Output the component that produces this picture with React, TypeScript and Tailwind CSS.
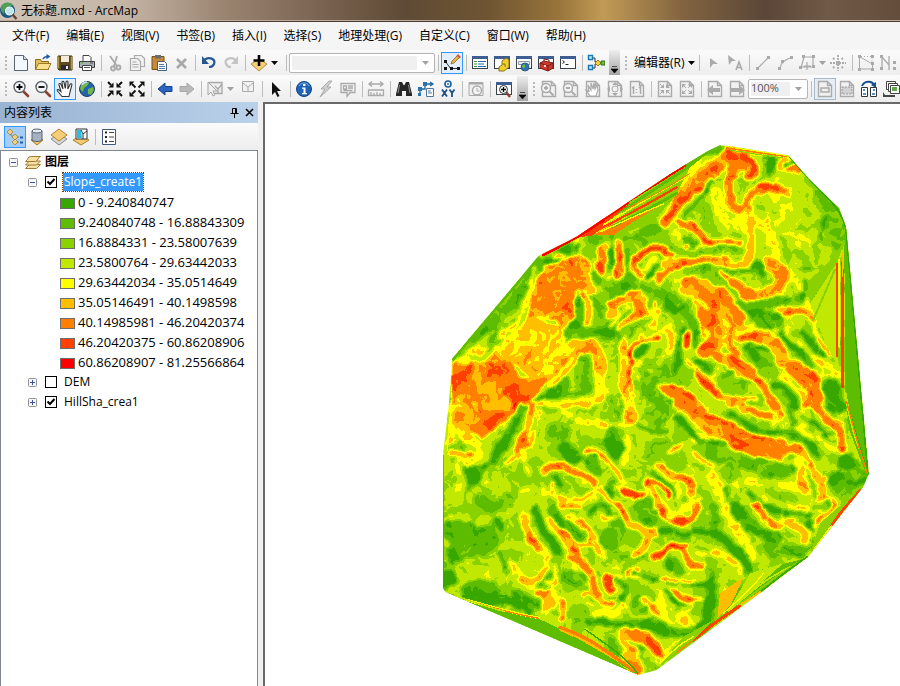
import { useState } from 'react';
import type { ReactNode } from 'react';
import clsx from 'clsx';

const menus = ['文件(F)', '编辑(E)', '视图(V)', '书签(B)', '插入(I)', '选择(S)', '地理处理(G)', '自定义(C)', '窗口(W)', '帮助(H)'];

const legend = [
  { color: '#38a800', label: '0 - 9.240840747' },
  { color: '#5ebd00', label: '9.240840748 - 16.88843309' },
  { color: '#8bd100', label: '16.8884331 - 23.58007639' },
  { color: '#c1e800', label: '23.5800764 - 29.63442033' },
  { color: '#ffff00', label: '29.63442034 - 35.0514649' },
  { color: '#ffbf00', label: '35.05146491 - 40.1498598' },
  { color: '#ff8000', label: '40.14985981 - 46.20420374' },
  { color: '#ff4000', label: '46.20420375 - 60.86208906' },
  { color: '#ff0000', label: '60.86208907 - 81.25566864' },
];

const G = '#aaaaaa';

const pageOutline = <path d="M2.5 1.5h9l4 4v11h-13zM11.5 1.5v4h4" fill="#f1f1f1" stroke={G} strokeWidth="1.4" />;
const windowFrame = (
  <>
    <rect x="1.5" y="2.5" width="15" height="12" fill="#fff" stroke="#3b4048" />
    <path d="M1 2h16v3H1z" fill="#3f5f92" />
  </>
);

// All drawings use an 18 x 18 box
const icons: Record<string, ReactNode> = {
  new: (
    <>
      <path d="M2.5 1.5h9l4 4v11h-13z" fill="#f3f8fd" stroke="#5b6570" />
      <path d="M11.5 1.5v4h4" fill="#c8d6e6" stroke="#5b6570" />
    </>
  ),
  open: (
    <>
      <path d="M1.5 15.5v-10h5l1 2h7v8z" fill="#e2bd58" stroke="#8d6a1c" />
      <path d="M1.5 15.5l3-6h12.5l-3 6z" fill="#f8e08e" stroke="#a07a25" />
      <path d="M9 5c1-2 2-2.5 5-2.5" fill="none" stroke="#1d5da8" strokeWidth="1.5" />
      <path d="M12.5 0l4 2.5-4 2.8z" fill="#1d5da8" />
    </>
  ),
  save: (
    <>
      <path d="M2 2h14v14H3l-1-1z" fill="#5d4a1e" stroke="#3a2f16" />
      <path d="M5 2h8v6H5z" fill="#f3edd8" />
      <path d="M2.5 2.5v12M15.5 2.5v13" stroke="#b89743" strokeWidth="1.5" />
      <path d="M5 11h8v5H5z" fill="#2b2b2b" />
      <path d="M10 12h2v3h-2z" fill="#eee" />
    </>
  ),
  print: (
    <>
      <path d="M5 7V1.5h6l2 2V7" fill="#fff" stroke="#444" />
      <path d="M1.5 7.5h15v6h-15z" fill="#a9b0b5" stroke="#3e3e3e" />
      <path d="M4.5 11.5h9v5h-9z" fill="#fff" stroke="#444" />
      <path d="M3 9h2" stroke="#5fc22c" strokeWidth="1.5" />
      <path d="M12 9h3M6 13.5h6" stroke="#555" />
    </>
  ),
  cut: (
    <g fill="none" stroke={G} strokeWidth="1.8">
      <path d="M4 2l7 10M11 2L8 12" />
      <circle cx="12.5" cy="13.5" r="2" />
      <circle cx="7" cy="14.5" r="2" />
    </g>
  ),
  copy: (
    <g fill="#f1f1f1" stroke={G} strokeWidth="1.2">
      <path d="M6.5 1.5h7l3 3v8h-10z" />
      <path d="M2.5 4.5h7l3 3v9h-10zM4.5 8h4M4.5 10.5h6M4.5 13h6" />
    </g>
  ),
  paste: (
    <>
      <path d="M2 2.5h12v13H2z" fill="#c78a3c" stroke="#7c4f17" />
      <path d="M5 1h6v3.5H5z" fill="#6b6b6b" />
      <path d="M7.5 7.5h7l2 2v7h-9z" fill="#fff" stroke="#48617d" />
      <path d="M9 10.5h5M9 12.5h6M9 14.5h6" stroke="#4a7db8" />
    </>
  ),
  remove: <path d="M5 5l9 9M14 5l-9 9" stroke="#a8a8a8" strokeWidth="2.6" />,
  undo: (
    <>
      <path d="M4 6c5-4 12-1 10 4-.8 2-3 3-5 3" fill="none" stroke="#24588f" strokeWidth="2.2" />
      <path d="M2 2v8h7z" fill="#24588f" />
    </>
  ),
  redo: (
    <>
      <path d="M14 6C9 2 2 5 4 10c.8 2 3 3 5 3" fill="none" stroke="#c4c4c4" strokeWidth="2.2" />
      <path d="M16 2v8H9z" fill="#c4c4c4" />
    </>
  ),
  addData: (
    <>
      <path d="M1 10l8-5 8 5-8 7z" fill="#f2cf72" stroke="#b98f3c" />
      <path d="M9 1v11M3.5 6.5h11" stroke="#000" strokeWidth="2.6" />
    </>
  ),
  editor: (
    <>
      <path d="M2.5 7.5l5 7h8" fill="none" stroke="#333" />
      <path d="M1 6h3v3H1zM1 13h3v3H1zM7 13h3v3H7zM14 13h3v3h-3z" fill="#111" />
      <path d="M8 10l1-3 6-6 2 2-6 6z" fill="#e9b54c" stroke="#8a6524" strokeWidth=".8" />
      <path d="M15 0l3 3-1.5 1.5-3-3z" fill="#d85247" />
    </>
  ),
  contents: (
    <>
      {windowFrame}
      <path d="M3 7.5h3M3 10h3M3 12.5h3" stroke="#3b8d3b" />
      <path d="M7 7.5h8M7 10h6M7 12.5h8" stroke="#2b6bb3" />
    </>
  ),
  catalog: (
    <>
      {windowFrame}
      <path d="M9 7l4-3 3 2v7l-5 4H6v-4l3-2z" fill="#f0cf2e" stroke="#8c7514" />
      <path d="M9 10h3v3" fill="none" stroke="#8c7514" />
    </>
  ),
  search: (
    <>
      {windowFrame}
      <path d="M3.5 7.5h11v3h-11z" fill="#e8edf2" stroke="#8d99a6" />
      <circle cx="10" cy="13" r="4" fill="#2d72b5" stroke="#285176" strokeWidth=".8" />
      <path d="M7 12c2-3 4-1 3 1s-2 2-3-1z" fill="#72b63b" />
    </>
  ),
  toolbox: (
    <>
      {windowFrame}
      <path d="M3 9l4-2 9 2v5l-5 3-8-3z" fill="#cd3a30" stroke="#7c1a15" />
      <path d="M3 9l8 3 5-3M11 12v5M7 7V5l5 1v2" fill="none" stroke="#7c1a15" />
      <path d="M8 11v2" stroke="#fff" strokeWidth="1.5" />
    </>
  ),
  python: (
    <>
      {windowFrame}
      <path d="M3.5 6.5l2 1.5-2 1.5M6.5 10.5h3" fill="none" stroke="#222" />
    </>
  ),
  model: (
    <>
      <path d="M5 4h3v4h4M5 14h3v-4h3" fill="none" stroke="#333" />
      <path d="M1.5 1.5h4v4h-4zM1.5 11.5h4v4h-4z" fill="#c6ebff" stroke="#1778bd" strokeWidth="1.4" />
      <path d="M8 9l3-3 3 3-3 3z" fill="#f1d23b" stroke="#9b811c" />
      <path d="M14 7h4v4h-4z" fill="#6dbb3e" stroke="#32711a" />
    </>
  ),
  editTool: <path d="M6 4l8 6H9l-3 4z" fill={G} />,
  editNote: (
    <>
      <path d="M2 1l8 6H6l-3 4z" fill={G} />
      <path d="M10 16l3-8 3 8M11 13.5h4" fill="none" stroke={G} strokeWidth="1.6" />
    </>
  ),
  segment: (
    <>
      <path d="M4 14L14 4" stroke={G} strokeWidth="1.2" />
      <path d="M2 13h3v3H2zM13 2h3v3h-3z" fill={G} />
    </>
  ),
  arc: (
    <>
      <path d="M4 14c1-5 4-8 10-10" fill="none" stroke={G} strokeWidth="1.2" />
      <path d="M2 13h3v3H2zM5 6h3v3H5zM14 2h3v3h-3z" fill={G} />
    </>
  ),
  trace: (
    <>
      <path d="M3 14L6 3h9v10H3M9 8v8M6 12h7" fill="none" stroke={G} strokeWidth="1.2" />
      <path d="M4 1h3v3H4zM14 1h3v3h-3zM14 11h3v3h-3zM1 12h3v3H1z" fill={G} />
    </>
  ),
  point: (
    <>
      <path d="M9 1v16M1 9h16M4 4l2 2M14 4l-2 2M4 14l2-2M14 14l-2-2" stroke={G} strokeWidth="1.8" strokeDasharray="2 1" />
      <path d="M7 7h4v4H7z" fill={G} />
    </>
  ),
  vertices: (
    <>
      <path d="M2.5 3v12h13v-5L3 3" fill="none" stroke={G} />
      <path d="M4 2.5h11v7" fill="none" stroke={G} strokeDasharray="1 2" />
      <path d="M1 1h3v3H1zM14 1h3v3h-3zM1 14h3v3H1zM14 14h3v3h-3zM14 8h3v3h-3z" fill={G} />
    </>
  ),
  reshape: (
    <>
      <path d="M3 15V3l7 8v5M10 2v14" fill="none" stroke={G} strokeWidth="1.3" />
      <path d="M1 1h3v3H1zM1 13h3v3H1zM14 7h3v3h-3zM14 13h3v3h-3z" fill={G} />
    </>
  ),
  zoomIn: (
    <>
      <path d="M11 11l5 5" stroke="#8c4032" strokeWidth="2.6" strokeLinecap="round" />
      <circle cx="7.5" cy="7" r="5.5" fill="#f4f7fa" stroke="#5c6269" strokeWidth="1.4" />
      <path d="M4.5 7h6M7.5 4v6" stroke="#000" strokeWidth="1.8" />
    </>
  ),
  zoomOut: (
    <>
      <path d="M11 11l5 5" stroke="#8c4032" strokeWidth="2.6" strokeLinecap="round" />
      <circle cx="7.5" cy="7" r="5.5" fill="#f4f7fa" stroke="#5c6269" strokeWidth="1.4" />
      <path d="M4.5 7h6" stroke="#000" strokeWidth="1.8" />
    </>
  ),
  pan: (
    <path
      d="M6 16.5L1.5 11c-1-1.5.5-2 1.5-1l2 1.5L3 5c-.4-1.6 1.4-2 2-.5L7 9 6 2.5C5.8 1 7.7.8 8 2.3L9.3 8.5 10 2c.2-1.5 2-1.3 2 0l-.2 7 2.2-4.5c.7-1.3 2.3-.7 1.8.7L14 12l-1 4.5z"
      fill="#fff"
      stroke="#333"
      strokeWidth="1.1"
    />
  ),
  globe: (
    <>
      <circle cx="9" cy="9" r="7.5" fill="#2464ae" stroke="#1d3f69" />
      <path d="M3 5c3-4 7-4 8-2l-2 3-3 2-1 4-3-3zM10 9l5-2 1 3-3 5-3-1z" fill="#73b64a" />
      <path d="M4 5c1-2 3-3 5-3" fill="none" stroke="#c6e4f5" strokeWidth="1.5" />
    </>
  ),
  fixedIn: (
    <>
      <path d="M2 2l3 3M16 2l-3 3M2 16l3-3M16 16l-3-3" stroke="#111" strokeWidth="2" />
      <path d="M7.5 2.5v5h-5zM10.5 2.5v5h5zM7.5 15.5v-5h-5zM10.5 15.5v-5h5z" fill="#111" />
    </>
  ),
  fixedOut: (
    <>
      <path d="M4 4l3.5 3.5M14 4l-3.5 3.5M4 14l3.5-3.5M14 14l-3.5-3.5" stroke="#111" strokeWidth="1.8" />
      <path d="M1.5 1.5h5l-5 5zM16.5 1.5h-5l5 5zM1.5 16.5h5l-5-5zM16.5 16.5h-5l5-5z" fill="#111" />
    </>
  ),
  back: <path d="M2 9l7-6v3.5h7v5H9V15z" fill="#2d63c0" stroke="#1b438d" />,
  forward: <path d="M16 9L9 3v3.5H2v5h7V15z" fill="#b9b9b9" stroke="#a9a9a9" />,
  selectFeatures: (
    <>
      <path d="M3 2.5h13v11H8M9 6l3 3 4-5M12 9v4" fill="#ececec" stroke={G} strokeWidth="1.4" />
      <path d="M2 2v13l3-3 2 4 2-1-2-4h4z" fill="#efefef" stroke="#a4a4a4" />
    </>
  ),
  clearSelection: <path d="M3.5 1.5h11v10h-11zM4 3l5 4 5-4M9 7v4" fill="#f1f1f1" stroke={G} />,
  pointer: <path d="M5 2v13l3-3 2.5 5 2-1-2.5-5h4z" fill="#111" />,
  identify: (
    <>
      <circle cx="9" cy="9" r="7.5" fill="#1f63b9" stroke="#15427e" />
      <path d="M4 6c2-4 8-4 10 0" stroke="#7fb2e5" fill="none" />
      <path d="M8 4h2.5v2H8zM7 7.5h3.5V13H12v1.2H7V13h1.5V8.7H7z" fill="#fff" />
    </>
  ),
  hyperlink: <path d="M12 1L4 9h4l-5 8L14 7h-4l5-6z" fill="#cfcfcf" stroke={G} />,
  popup: <path d="M2 3.5h14v9h-5l-3 4v-4H2zM4.5 6h3v3h-3zM9 6h5M9 8h5M4.5 10.5h9" fill="none" stroke={G} strokeWidth="1.3" />,
  measure: (
    <>
      <path d="M2 4h14M5 1.5L2 4l3 2.5M13 1.5L16 4l-3 2.5" fill="none" stroke={G} strokeWidth="1.5" />
      <path d="M1.5 10h15v5.5h-15zM4 12v3M7 13v2M10 12v3M13 13v2" fill="none" stroke={G} strokeWidth="1.3" />
    </>
  ),
  find: (
    <>
      <path d="M4 2h3l1.5 3h1L11 2h3l3 12v2h-6v-5H7v5H1v-2z" fill="#272727" />
      <path d="M4.5 5L3 13M13.5 5l1.5 8" stroke="#8f8f8f" />
    </>
  ),
  route: (
    <>
      <path d="M3 15V9h5V4h7M13 2l3 2-3 2" fill="none" stroke="#24669c" strokeWidth="1.3" />
      <path d="M1 7h4v4H1zM6 2h4v4H6zM1 13h3v3H1z" fill="#2c74b0" />
      <path d="M9.5 8.5h7v8h-7zM11 11h3M11 13h4" fill="#fff" stroke="#52779a" />
    </>
  ),
  goToXY: (
    <>
      <circle cx="9" cy="4" r="3" fill="#fff" stroke="#1d5c9c" strokeWidth="1.6" />
      <circle cx="9" cy="4" r="1" fill="#1d5c9c" />
      <path d="M3 9.5l5 7M8 9.5l-5 7M10.5 9.5l2.5 3.5 2.5-3.5M13 13v4" fill="none" stroke="#1d4f88" strokeWidth="1.8" />
    </>
  ),
  time: (
    <>
      <path d="M2 2.5h14v13H2z" fill="#eee" stroke={G} />
      <path d="M2 2h14v2.5H2z" fill={G} />
      <circle cx="10" cy="10.5" r="4.5" fill="#f5f5f5" stroke={G} strokeWidth="1.4" />
      <path d="M10 8v3h2.5" fill="none" stroke={G} />
    </>
  ),
  viewer: (
    <>
      {windowFrame}
      <path d="M11 12l4 5" stroke="#8c4032" strokeWidth="2.5" />
      <circle cx="8.5" cy="9.5" r="4" fill="#fff" stroke="#333" />
      <path d="M6 9.5h5M8.5 7v5" stroke="#000" strokeWidth="1.3" />
    </>
  ),
  pageZoomIn: (
    <>
      {pageOutline}
      <circle cx="6" cy="8" r="4.5" fill="#f4f4f4" stroke={G} strokeWidth="1.5" />
      <path d="M4 8h4M6 6v4M9.5 11.5l4 4" stroke={G} strokeWidth="1.8" />
    </>
  ),
  pageZoomOut: (
    <>
      {pageOutline}
      <circle cx="6" cy="8" r="4.5" fill="#f4f4f4" stroke={G} strokeWidth="1.5" />
      <path d="M4 8h4M9.5 11.5l4 4" stroke={G} strokeWidth="1.8" />
    </>
  ),
  pagePan: (
    <>
      {pageOutline}
      <path d="M6 16L2 10l3 1-1-6 3 5V3l2 6 1-6 1 6 2-4 1 5-2 6z" fill="#fff" stroke={G} strokeWidth="1.2" />
    </>
  ),
  pageWhole: (
    <>
      {pageOutline}
      <path d="M9 2l3 3H6zM9 16l3-3H6zM1 9l3-3v6zM17 9l-3-3v6z" fill={G} />
      <circle cx="9" cy="9" r="3" fill="none" stroke={G} />
    </>
  ),
  pageActual: (
    <>
      {pageOutline}
      <path d="M4 8l1.5-1v7M11 8l1.5-1v7M8.5 9v1M8.5 12v1" fill="none" stroke={G} strokeWidth="1.5" />
    </>
  ),
  pageFixedIn: (
    <>
      {pageOutline}
      <path d="M8 4v4H4zM10 4v4h4zM8 14v-4H4zM10 14v-4h4z" fill={G} />
      <path d="M4 4l4 4M14 4l-4 4M4 14l4-4M14 14l-4-4" stroke={G} />
    </>
  ),
  pageFixedOut: (
    <>
      {pageOutline}
      <path d="M4 4h4L4 8zM14 4h-4l4 4zM4 14h4l-4-4zM14 14h-4l4-4z" fill={G} />
      <path d="M5 5l3 3M13 5l-3 3M5 13l3-3M13 13l-3-3" stroke={G} />
    </>
  ),
  pageBack: (
    <>
      {pageOutline}
      <path d="M1 10l6-5v3h7v4H7v3z" fill={G} />
    </>
  ),
  pageForward: (
    <>
      {pageOutline}
      <path d="M17 10l-6-5v3H3v4h8v3z" fill={G} />
    </>
  ),
  draft: (
    <>
      {pageOutline}
      <path d="M5 8h8v4H5z" fill="none" stroke={G} strokeWidth="1.5" />
    </>
  ),
  focus: (
    <>
      {pageOutline}
      <path d="M4 7h10v7H4z" fill="#d0d0d0" stroke="#999" strokeDasharray="2 1" />
    </>
  ),
  changeLayout: (
    <>
      <path d="M2 6c2-5 10-6 12-1" fill="none" stroke="#17508d" strokeWidth="2" />
      <path d="M16 2v6l-5-3z" fill="#17508d" />
      <path d="M1.5 7.5h6v9h-6zM10.5 7.5h6v9h-6z" fill="#fff" stroke="#333" />
      <path d="M3 9h2v2H3zM3 13h3v2H3zM13 9h2v2h-2zM12 13h3v2h-3z" fill="#4d93c8" />
    </>
  ),
  drivenPages: (
    <>
      <path d="M4.5 1.5h9v8h-9z" fill="#fff" stroke="#444" />
      <path d="M6.5 3.5h9v8h-9z" fill="#fff" stroke="#444" />
      <path d="M8.5 5.5h9v8h-9z" fill="#fff" stroke="#444" />
      <path d="M10 7h5v4h-5z" fill="#5fa945" />
      <path d="M1 12l2 3h10v2H1z" fill="#444" />
    </>
  ),
  listOrder: (
    <>
      <path d="M5 5v3h4v6M9 9h4M9 14h4" fill="none" stroke="#7189a5" />
      <path d="M1 4l3-3 3 3-3 3zM6 9l3-3 3 3-3 3zM6 14l3-3 3 3-3 3z" fill="#f3cf79" stroke="#a8802e" strokeWidth=".8" />
      <path d="M14 9.5h3M14 14.5h3" stroke="#1d63a8" strokeWidth="1.8" />
    </>
  ),
  listSource: (
    <>
      <path d="M3 12l6-3 6 3-6 5z" fill="#f1c55e" stroke="#a8802e" />
      <path d="M4 3v9c2 2 8 2 10 0V3z" fill="#a6b1c1" stroke="#566273" />
      <ellipse cx="9" cy="3" rx="5" ry="2" fill="#e5eaf1" stroke="#566273" />
    </>
  ),
  listVisibility: (
    <>
      <path d="M1 11l8-5 8 5-8 6z" fill="#d5d5d5" stroke="#8b8b8b" />
      <path d="M1 7l8-6 8 6-8 6z" fill="#f6ce77" stroke="#b0822e" />
    </>
  ),
  listSelection: (
    <>
      <path d="M1 12l8-4 8 4-8 5z" fill="#f3cb70" stroke="#a8802e" />
      <path d="M4 1h11v10H4z" fill="#fff" stroke="#333" />
      <path d="M5 2h4l1 8H5z" fill="#29bfe0" />
      <path d="M9 2l2 4 4-3M11 6v5" fill="none" stroke="#333" />
    </>
  ),
  listOptions: (
    <>
      <path d="M2.5 1.5h13v15h-13z" fill="#fff" stroke="#41597a" />
      <path d="M5 4.5h2M5 9h2M5 13.5h2" stroke="#222" strokeWidth="2" />
      <path d="M9 4.5h5M9 9h5M9 13.5h5" stroke="#444" />
    </>
  ),
};

function Icon({ name }: { name: string }) {
  return (
    <svg viewBox="0 0 18 18" className="size-[18px] shrink-0" aria-hidden="true">
      {icons[name]}
    </svg>
  );
}

function ToolButton({ name, active, muted }: { name: string; active?: boolean; muted?: boolean }) {
  return (
    <button
      type="button"
      aria-label={name}
      className={clsx(
        'flex h-[22px] w-[22px] shrink-0 items-center justify-center border',
        active && !muted && 'border-[#3399ff] bg-[#e2effb]',
        active && muted && 'border-[#a9b8c8] bg-[#e6edf4]',
        !active && 'border-transparent',
      )}
    >
      <Icon name={name} />
    </button>
  );
}

function Separator() {
  return <div className="mr-0.5 ml-[3px] h-4 w-px shrink-0 bg-[#bdbdbd]" />;
}

function Grip() {
  return (
    <div className="mx-[3px] flex shrink-0 flex-col gap-[2px]">
      {[0, 1, 2, 3].map((i) => (
        <span key={i} className="size-[2px] bg-[#b8b8b8]" />
      ))}
    </div>
  );
}

function Caret({ gray }: { gray?: boolean }) {
  return (
    <svg viewBox="0 0 7 4" className="mx-px h-1 w-[7px] shrink-0" aria-hidden="true">
      <path d="M0 0h7L3.5 4z" fill={gray ? '#a0a0a0' : '#000'} />
    </svg>
  );
}

function Overflow() {
  return (
    <button type="button" aria-label="more" className="flex h-[25px] w-[11px] shrink-0 items-end justify-center bg-linear-to-b from-[#eeeeee] to-[#a4a4a4] pb-0.5">
      <svg viewBox="0 0 7 7" className="size-[7px]" aria-hidden="true">
        <path d="M1 .5h5M0 3h7L3.5 7z" stroke="#000" strokeWidth=".6" />
      </svg>
    </button>
  );
}

function Tools({ names }: { names: string[] }) {
  return (
    <>
      {names.map((name, i) => (name === '|' ? <Separator key={i} /> : <ToolButton key={i} name={name} active={name === 'pan'} />))}
    </>
  );
}

function Combo({ label, value, className }: { label: string; value?: string; className: string }) {
  return (
    <div className={clsx('relative h-5 shrink-0', className)}>
      <select
        aria-label={label}
        className="block size-full appearance-none rounded-xs border border-[#b5b5b5] bg-[#f0f0f0] pl-0.5 text-[11px] text-[#555555] shadow-[inset_0_0_0_2px_#fff]"
      >
        {value && <option>{value}</option>}
      </select>
      <span className="pointer-events-none absolute top-0.5 right-0.5 flex h-4 w-4 items-center justify-center bg-white">
        <Caret gray />
      </span>
    </div>
  );
}

function TitleBar() {
  return (
    <header className="flex h-[22px] shrink-0 items-center gap-[3px] border-b border-[#4c3a2e] bg-[linear-gradient(90deg,#cfc3b7_0%,#c4b4a4_14%,#9a8470_25%,#79624f_36%,#5f4a35_45%,#6e5432_54%,#98743b_62%,#c19a55_67%,#81633f_76%,#5b4638_85%,#705946_92%,#654d3c_100%)] shadow-[inset_0_-1px_0_#bbaea2]">
      <svg viewBox="0 0 18 18" className="size-[18px]" aria-hidden="true">
        <circle cx="7.5" cy="8.5" r="7.5" fill="#1d567f" />
        <path d="M1 6c1-6 9-7 12-3L8 6l-3 1-1 5-3-3z" fill="#4f9f58" />
        <circle cx="9.5" cy="9" r="4" fill="#bfe6ef" stroke="#e9f5f7" strokeWidth="1.2" />
        <path d="M12.5 12.5l4 4.5" stroke="#6f3f2b" strokeWidth="2.5" />
      </svg>
      <h1 className="text-xs leading-5 whitespace-nowrap text-black">无标题.mxd - ArcMap</h1>
    </header>
  );
}

function Toolbars() {
  return (
    <div className="shrink-0 overflow-hidden bg-[#f2f2f2]">
      <div className="flex h-[25px] items-center bg-linear-to-b from-[#fbfbfb] to-[#ededed] pl-0.5">
        <Grip />
        <Tools names={['new', 'open', 'save', 'print', '|', 'cut', 'copy', 'paste', 'remove', '|', 'undo', 'redo', '|', 'addData']} />
        <Caret />
        <span className="w-1 shrink-0" />
        <Separator />
        <Combo label="scale" className="w-[146px]" />
        <Separator />
        <ToolButton name="editor" active />
        <Separator />
        <Tools names={['contents', 'catalog', 'search', 'toolbox', 'python', '|', 'model']} />
        <span className="w-0.5 shrink-0" />
        <Overflow />
        <span className="w-0.5 shrink-0" />
        <Grip />
        <button type="button" className="ml-1 flex shrink-0 items-center gap-0.5 text-xs whitespace-nowrap">
          编辑器(R)
          <Caret />
        </button>
        <Separator />
        <Tools names={['editTool', 'editNote', '|', 'segment', 'arc', 'trace']} />
        <Caret gray />
        <Tools names={['point', '|', 'vertices', 'reshape']} />
      </div>
      <div className="flex h-[27px] items-center bg-linear-to-b from-[#fbfbfb] to-[#ededed] pl-0.5">
        <Grip />
        <Tools names={['zoomIn', 'zoomOut', 'pan', 'globe', '|', 'fixedIn', 'fixedOut', '|', 'back', 'forward', '|', 'selectFeatures']} />
        <Caret gray />
        <span className="w-0.5 shrink-0" />
        <Tools names={['clearSelection', '|', 'pointer', '|', 'identify', 'hyperlink', 'popup', '|', 'measure', '|', 'find', 'route', 'goToXY', '|', 'time', '|', 'viewer']} />
        <span className="w-0.5 shrink-0" />
        <Overflow />
        <span className="w-0.5 shrink-0" />
        <Grip />
        <Tools names={['pageZoomIn', 'pageZoomOut', 'pagePan', 'pageWhole', 'pageActual', '|', 'pageFixedIn', 'pageFixedOut', '|', 'pageBack', 'pageForward']} />
        <Combo label="zoom" value="100%" className="w-[60px]" />
        <Separator />
        <ToolButton name="draft" active muted />
        <Tools names={['focus', 'changeLayout', 'drivenPages']} />
      </div>
    </div>
  );
}

function Expander({ open }: { open?: boolean }) {
  return (
    <button type="button" aria-label={open ? 'collapse' : 'expand'} className="size-[9px] shrink-0">
      <svg viewBox="0 0 9 9" className="size-[9px]" aria-hidden="true">
        <rect x=".5" y=".5" width="8" height="8" rx="1" fill="#f6f6f6" stroke="#929292" />
        <path d={open ? 'M2 4.5h5' : 'M2 4.5h5M4.5 2v5'} stroke="#3b55a0" />
      </svg>
    </button>
  );
}

function LayerRow({ name, checked, open, selected }: { name: string; checked?: boolean; open?: boolean; selected?: boolean }) {
  const [on, setOn] = useState(!!checked);
  return (
    <div className="flex h-5 items-center pl-[27px]">
      <Expander open={open} />
      <label className="ml-2 flex items-center gap-[5px]">
        <span className="grid size-3 *:[grid-area:1/1]">
          <input type="checkbox" checked={on} onChange={() => setOn(!on)} className="size-3 appearance-none border border-black bg-white" />
          {on && (
            <svg viewBox="0 0 12 12" className="pointer-events-none size-3" aria-hidden="true">
              <path d="M2.5 5.5L5 8l4.5-5" fill="none" stroke="#000" strokeWidth="2" />
            </svg>
          )}
        </span>
        <span
          className={clsx(
            'border px-px text-xs leading-[18px]',
            selected ? 'border-dotted border-[#7a3a00] bg-[#3399ff] bg-clip-padding text-white' : 'border-transparent',
          )}
        >
          {name}
        </span>
      </label>
    </div>
  );
}

function ContentsPanel() {
  return (
    <aside className="flex w-[258px] shrink-0 flex-col">
      <div className="flex h-[21px] shrink-0 items-center bg-linear-to-r from-[#9ab3d2] to-[#b9d1ea] pr-1 pl-1">
        <h2 className="flex-1 text-xs">内容列表</h2>
        <button type="button" aria-label="pin" className="mr-1.5">
          <svg viewBox="0 0 9 10" className="h-2.5 w-[9px]" aria-hidden="true">
            <path d="M2.5 5.5v-5h4v5M5.5 1v5M.5 5.5h8M4.5 6v4" fill="none" stroke="#000" />
          </svg>
        </button>
        <button type="button" aria-label="close">
          <svg viewBox="0 0 9 9" className="size-[9px]" aria-hidden="true">
            <path d="M1 1l7 7M8 1L1 8" stroke="#000" strokeWidth="1.6" />
          </svg>
        </button>
      </div>
      <div className="flex h-[27px] shrink-0 items-center bg-linear-to-b from-[#fbfbfb] to-[#ededed] pl-1">
        <button type="button" aria-label="listOrder" className="flex size-[22px] items-center justify-center border border-[#3399ff] bg-[#a4cdf8]">
          <Icon name="listOrder" />
        </button>
        <Tools names={['listSource', 'listVisibility', 'listSelection', '|', 'listOptions']} />
      </div>
      <div className="flex-1 border border-b-0 border-[#828790] bg-white pt-px">
        <div className="flex h-5 items-center pl-2">
          <Expander open />
          <svg viewBox="0 0 18 18" className="ml-1.5 size-[18px]" aria-hidden="true">
            <path d="M1.5 15.5l4-4h11l-4 4z" fill="#f8dfa2" stroke="#a27b34" />
            <path d="M1.5 12l4-4h11l-4 4z" fill="#f8dfa2" stroke="#a27b34" />
            <path d="M1.5 8.5c3-2 2-5 5-5h10c-3 1-2 4-5 5z" fill="#f8dfa2" stroke="#a27b34" />
          </svg>
          <span className="ml-[3px] text-xs font-bold">图层</span>
        </div>
        <LayerRow name="Slope_create1" checked open selected />
        <ul>
          {legend.map((item) => (
            <li key={item.color} className="flex h-5 items-center gap-[3px] pl-[59px]">
              <span className="mt-0.5 h-[11px] w-[15px] border border-[#6e6e6e]" style={{ backgroundColor: item.color }} />
              <span className="text-[13px] leading-[18px] whitespace-nowrap">{item.label}</span>
            </li>
          ))}
        </ul>
        <LayerRow name="DEM" />
        <LayerRow name="HillSha_crea1" checked />
      </div>
    </aside>
  );
}

// [slope class 0-8, line width (0 = filled area), x, y, x, y, ...]
type Feature = number[];

const northWest: Feature[] = [
  [2, 0, 60, 690, 325, 378, 470, 330, 720, 260, 720, 840, 60, 840],
  [1, 34, 325, 390, 285, 470, 225, 545, 140, 625, 80, 690],
  [3, 30, 310, 500, 245, 580, 180, 625, 120, 690],
  [4, 14, 320, 400, 302, 480, 275, 560, 215, 610, 150, 670],
  [4, 26, 90, 690, 150, 650, 210, 610],
  [1, 10, 185, 640, 205, 600, 240, 570],
  [6, 0, 340, 415, 395, 385, 450, 380, 490, 425, 480, 470, 440, 480, 438, 570, 415, 605, 380, 570, 290, 570, 320, 480],
  [5, 0, 290, 565, 420, 590, 412, 660, 370, 730, 320, 755, 240, 700, 160, 690, 230, 620],
  [5, 8, 330, 440, 320, 510],
  [5, 8, 345, 570, 370, 530],
  [5, 8, 440, 400, 400, 430],
  [4, 14, 160, 690, 220, 650, 270, 600],
  [4, 12, 235, 680, 290, 640, 310, 610],
  [4, 10, 290, 710, 340, 670, 350, 650],
  [4, 9, 320, 730, 370, 690, 390, 660],
  [4, 9, 250, 700, 285, 670],
  [6, 0, 68, 690, 240, 700, 270, 740, 350, 745, 320, 800, 245, 850, 160, 930, 100, 860, 66, 870],
  [5, 0, 66, 800, 110, 790, 150, 830, 130, 890, 100, 930, 55, 940],
  [7, 9, 72, 700, 70, 820],
  [7, 8, 200, 800, 270, 775],
  [6, 16, 340, 760, 400, 700, 440, 640],
  [5, 16, 360, 770, 415, 715, 440, 680],
  [7, 10, 345, 405, 390, 390],
  [0, 34, 395, 358, 450, 355],
  [0, 20, 350, 388, 380, 382],
  [1, 22, 325, 390, 335, 410],
  [7, 7, 370, 375, 400, 378],
  [4, 10, 450, 328, 475, 350, 450, 372],
  [1, 20, 490, 325, 560, 322],
  [0, 28, 452, 510, 448, 560, 425, 615],
  [7, 10, 462, 485, 482, 520, 465, 560],
  [5, 22, 480, 440, 490, 500, 465, 580],
  [4, 12, 490, 400, 510, 470, 540, 440],
  [6, 26, 515, 350, 515, 420],
  [0, 12, 538, 360, 540, 420],
  [6, 32, 565, 340, 568, 430],
  [7, 10, 562, 350, 565, 400],
  [1, 24, 597, 360, 600, 440],
  [1, 30, 620, 310, 665, 300, 690, 285],
  [0, 26, 530, 468, 555, 465],
  [1, 20, 490, 430, 530, 460, 620, 470, 690, 480],
  [7, 24, 615, 400, 630, 370, 670, 360, 720, 365],
  [6, 16, 610, 410, 640, 450, 690, 430],
  [4, 26, 645, 420, 665, 400],
  [0, 14, 655, 440, 675, 410],
  [6, 30, 545, 550, 560, 515, 610, 500, 635, 520, 630, 560, 590, 580, 550, 590],
  [7, 14, 540, 525, 580, 505],
  [7, 12, 590, 485, 630, 490],
  [4, 18, 600, 535, 560, 560],
  [1, 10, 540, 600, 600, 545],
  [5, 14, 640, 500, 650, 550],
  [1, 38, 430, 610, 520, 608],
  [0, 22, 500, 605, 545, 605],
  [1, 16, 490, 500, 520, 560],
  [5, 40, 430, 655, 490, 640, 510, 680, 512, 790],
  [6, 14, 440, 660, 490, 640, 500, 720],
  [0, 38, 457, 700, 452, 750],
  [1, 30, 455, 690, 455, 790],
  [0, 34, 400, 760, 360, 800, 300, 835],
  [4, 20, 310, 820, 400, 815, 490, 810, 530, 770],
  [3, 30, 540, 660, 550, 780],
  [5, 30, 580, 640, 580, 740, 595, 840],
  [7, 11, 690, 625, 620, 635, 600, 665, 605, 760, 612, 800],
  [0, 20, 640, 650, 615, 680],
  [4, 10, 625, 700, 630, 790],
  [3, 30, 650, 600, 700, 600],
  [4, 16, 675, 520, 685, 600, 640, 620],
  [0, 18, 715, 500, 712, 540],
  [2, 40, 660, 700, 650, 780],
  [1, 40, 670, 790, 700, 820],
  [6, 12, 690, 770, 720, 775],
];

const northEast: Feature[] = [
  [1, 30, 60, 140, 140, 90, 210, 60],
  [3, 0, 300, 200, 420, 110, 560, 230, 570, 360, 470, 460, 420, 510, 350, 520, 290, 400],
  [2, 0, 440, 110, 570, 235, 590, 300, 560, 390, 520, 380, 500, 210],
  [1, 0, 520, 200, 570, 235, 590, 300, 560, 380, 520, 300],
  [4, 44, 80, 240, 110, 140, 170, 95, 260, 100],
  [5, 40, 50, 270, 110, 170, 200, 110],
  [6, 40, 45, 275, 120, 170, 200, 120],
  [7, 20, 45, 270, 100, 205, 160, 170],
  [7, 12, 150, 140, 210, 120],
  [6, 46, 230, 75, 290, 85, 300, 130],
  [7, 24, 240, 70, 290, 85],
  [5, 18, 250, 55, 320, 70, 400, 76],
  [2, 12, 300, 75, 340, 85],
  [0, 26, 360, 95, 365, 115],
  [6, 34, 400, 95, 435, 120],
  [0, 20, 410, 105, 430, 100],
  [6, 34, 245, 120, 240, 190, 240, 235, 290, 245],
  [7, 12, 250, 160, 245, 210],
  [6, 24, 290, 220, 320, 180, 370, 165, 410, 190],
  [7, 10, 325, 170, 380, 165],
  [4, 36, 195, 180, 210, 270, 280, 290],
  [0, 10, 115, 250, 150, 210, 190, 150],
  [1, 14, 110, 300, 115, 250],
  [3, 34, 170, 290, 230, 310],
  [2, 24, 330, 230, 370, 230],
  [4, 34, 290, 260, 350, 290, 380, 330, 370, 380],
  [5, 24, 300, 280, 310, 330, 295, 390],
  [5, 12, 345, 260, 375, 310, 380, 350],
  [6, 20, 90, 280, 135, 300, 180, 335, 270, 340],
  [7, 14, 130, 280, 150, 320, 190, 340],
  [0, 28, 110, 340, 135, 345],
  [8, 7, 105, 352, 125, 362, 150, 350],
  [1, 20, 60, 350, 100, 370, 200, 355, 260, 358],
  [7, 26, 0, 362, 45, 365],
  [5, 30, 40, 400, 110, 390, 150, 380, 230, 400, 290, 410],
  [6, 20, 30, 450, 60, 410, 150, 382, 210, 395, 260, 410],
  [0, 16, 5, 430, 15, 410],
  [1, 30, 110, 420, 170, 415],
  [1, 26, 230, 420, 270, 425, 310, 430],
  [0, 26, 310, 410, 335, 430],
  [6, 40, 225, 440, 270, 490, 340, 495, 395, 470, 400, 420, 350, 400],
  [4, 10, 220, 455, 250, 440, 300, 440],
  [4, 14, 260, 510, 350, 520, 400, 500, 420, 440],
  [1, 12, 200, 430, 240, 480, 270, 510],
  [2, 30, 455, 370, 465, 420],
  [0, 12, 465, 460, 460, 510],
  [2, 24, 480, 500, 550, 400],
  [3, 0, 480, 520, 560, 400, 560, 700, 500, 600],
  [4, 12, 470, 500, 490, 560, 500, 600],
  [5, 18, 375, 550, 420, 530, 470, 540, 490, 570],
  [6, 14, 390, 550, 440, 540, 485, 560],
  [0, 40, 380, 580, 330, 570, 300, 525],
  [1, 30, 280, 520, 340, 530, 450, 510],
  [6, 56, 120, 470, 180, 480, 220, 530, 260, 560],
  [5, 20, 90, 480, 150, 520, 180, 560],
  [7, 10, 130, 460, 190, 490, 200, 530],
  [0, 34, 60, 520, 70, 540],
  [1, 30, 50, 490, 90, 550, 150, 590],
  [6, 56, 170, 560, 210, 590, 200, 650, 170, 660],
  [5, 20, 210, 560, 230, 620, 200, 680],
  [0, 22, 100, 600, 90, 680, 70, 720],
  [7, 14, 115, 600, 115, 650],
  [0, 14, 130, 600, 135, 650],
  [7, 9, 155, 590, 160, 620],
  [6, 20, 240, 590, 235, 640, 260, 680],
  [6, 46, 270, 610, 330, 605, 370, 640, 395, 690],
  [7, 14, 275, 615, 330, 605],
  [0, 12, 300, 640, 350, 670],
  [4, 14, 260, 610, 300, 590, 370, 600, 400, 640, 420, 690],
  [5, 14, 110, 690, 150, 730, 190, 770],
  [6, 34, 210, 680, 270, 710, 340, 760, 380, 830],
  [7, 16, 240, 690, 280, 720, 340, 760, 380, 830],
  [0, 24, 290, 660, 320, 700],
  [1, 40, 330, 710, 370, 720],
  [0, 22, 395, 610, 440, 660, 490, 710],
  [4, 18, 410, 600, 470, 670, 530, 710, 560, 730],
  [0, 18, 460, 610, 490, 650, 530, 680],
  [6, 12, 500, 600, 520, 640, 545, 680],
  [6, 50, 430, 710, 480, 740, 500, 800],
  [7, 12, 430, 710, 480, 740],
  [0, 56, 540, 770, 560, 820],
  [0, 20, 380, 760, 420, 780, 440, 830],
  [5, 16, 400, 740, 440, 760, 470, 820],
  [7, 18, 140, 740, 180, 775, 220, 800],
  [6, 14, 210, 795, 260, 812, 320, 815],
  [6, 40, 50, 780, 90, 800, 150, 835],
  [7, 12, 60, 760, 130, 800],
  [4, 20, 30, 700, 70, 650, 60, 590],
  [0, 26, 150, 700, 175, 720],
  [2, 50, 230, 760, 290, 770],
  [0, 14, 225, 730, 245, 725],
  [7, 8, 15, 510, 22, 550],
  [4, 18, 10, 530, 10, 620],
];

const southWest: Feature[] = [
  [6, 46, 130, 80, 190, 40, 280, 0],
  [5, 34, 70, 20, 120, 60, 160, 100],
  [7, 16, 190, 65, 220, 30, 290, 0],
  [4, 26, 60, 90, 90, 120, 150, 130, 140, 170],
  [6, 18, 70, 160, 120, 165],
  [5, 12, 85, 180, 130, 185],
  [4, 20, 85, 190, 85, 290],
  [3, 30, 60, 290, 120, 290, 190, 240],
  [0, 24, 270, 30, 240, 80, 220, 140, 180, 190],
  [0, 0, 105, 195, 180, 200, 150, 230, 122, 275],
  [6, 24, 310, 20, 290, 80, 270, 150],
  [5, 12, 330, 40, 300, 140, 230, 190],
  [5, 16, 330, 15, 430, 20, 510, 0],
  [4, 16, 400, 40, 470, 70, 590, 80],
  [1, 50, 370, 90, 400, 100],
  [2, 50, 520, 40, 560, 50],
  [5, 40, 590, 0, 600, 60],
  [1, 60, 670, 40, 690, 50],
  [0, 50, 545, 110, 560, 150],
  [0, 12, 620, 80, 700, 90],
  [0, 52, 405, 155, 420, 165],
  [0, 16, 440, 180, 450, 170],
  [0, 34, 490, 180, 500, 210],
  [6, 14, 470, 155, 515, 155, 540, 200, 570, 240],
  [4, 16, 590, 100, 580, 200],
  [6, 24, 340, 210, 400, 195, 440, 220, 490, 250],
  [7, 18, 370, 200, 410, 205, 440, 230],
  [6, 12, 365, 250, 370, 285, 390, 300],
  [5, 14, 370, 290, 400, 300, 450, 300, 500, 270],
  [4, 20, 345, 270, 380, 310, 450, 320, 500, 290],
  [0, 20, 375, 240, 390, 255],
  [6, 10, 400, 315, 450, 320],
  [4, 20, 280, 160, 290, 220],
  [5, 10, 270, 280, 300, 265],
  [1, 40, 160, 310, 210, 330, 230, 300],
  [1, 90, 90, 440, 160, 420],
  [0, 60, 70, 400, 110, 390],
  [0, 30, 60, 440, 70, 470],
  [0, 40, 60, 520, 60, 550],
  [0, 80, 130, 580, 170, 580],
  [3, 16, 60, 580, 95, 550, 90, 520],
  [0, 14, 200, 360, 230, 400],
  [3, 26, 240, 380, 200, 460, 230, 540],
  [0, 12, 210, 460, 235, 520],
  [5, 34, 285, 350, 300, 420, 345, 470],
  [6, 20, 290, 370, 315, 430, 320, 450],
  [0, 22, 315, 320, 345, 400, 380, 450],
  [0, 36, 370, 330, 385, 350],
  [6, 28, 365, 365, 400, 420, 440, 470, 480, 530, 500, 590],
  [4, 10, 350, 350, 400, 440, 440, 520],
  [7, 14, 420, 470, 460, 510],
  [0, 28, 410, 370, 445, 410],
  [6, 10, 380, 370, 430, 430, 490, 435],
  [5, 22, 420, 350, 470, 380, 510, 440, 520, 480],
  [6, 14, 450, 360, 480, 400, 480, 430],
  [0, 24, 540, 250, 540, 280],
  [0, 14, 480, 340, 510, 300, 540, 350],
  [6, 14, 515, 270, 530, 290, 570, 320],
  [7, 22, 570, 310, 590, 350, 600, 380],
  [7, 20, 585, 270, 640, 285],
  [7, 20, 650, 250, 690, 245, 720, 290],
  [4, 18, 650, 270, 690, 300, 720, 330],
  [7, 18, 680, 310, 720, 365],
  [5, 14, 510, 350, 550, 360],
  [1, 60, 560, 390, 540, 420],
  [1, 50, 640, 320, 660, 350],
  [6, 26, 600, 380, 660, 390, 640, 440, 610, 460],
  [7, 22, 670, 470, 720, 440],
  [1, 20, 590, 510, 610, 480, 640, 470],
  [6, 10, 600, 510, 620, 500, 640, 520, 620, 540, 600, 520],
  [0, 10, 615, 515, 640, 530, 700, 530],
  [4, 16, 250, 480, 270, 530, 300, 560],
  [5, 24, 280, 545, 320, 530, 350, 500],
  [1, 24, 330, 550, 365, 510],
  [7, 30, 530, 525, 540, 565],
  [7, 10, 520, 530, 570, 520],
  [0, 20, 560, 530, 590, 570, 570, 600],
  [6, 14, 460, 580, 500, 590, 520, 615, 550, 610],
  [4, 24, 500, 640, 560, 640, 590, 610],
  [1, 40, 410, 530, 440, 540],
  [6, 18, 320, 580, 360, 580, 400, 600, 400, 650],
  [4, 40, 350, 620, 380, 590],
  [5, 14, 380, 490, 400, 550, 340, 545],
  [0, 22, 270, 590, 320, 610],
  [0, 26, 160, 590, 240, 600, 290, 630],
  [1, 46, 620, 630, 640, 610],
  [0, 26, 480, 665, 570, 670, 700, 680],
  [3, 8, 490, 680, 540, 680],
  [5, 50, 590, 700, 600, 760, 620, 800],
  [7, 20, 620, 690, 670, 720, 690, 760],
  [6, 40, 600, 700, 650, 710, 680, 740],
  [0, 10, 600, 730, 640, 750],
  [6, 30, 600, 760, 620, 800],
  [4, 30, 650, 600, 690, 640, 720, 660],
  [6, 8, 680, 590, 700, 620],
];

const southEast: Feature[] = [
  [6, 52, 80, 0, 160, 60, 240, 90, 330, 130, 390, 150],
  [6, 40, 200, 100, 300, 150, 380, 180],
  [7, 18, 140, 40, 200, 60, 260, 80, 360, 120],
  [7, 8, 220, 90, 290, 140],
  [4, 16, 90, 40, 170, 110, 280, 170, 380, 190, 430, 200],
  [0, 22, 80, 60, 150, 120, 220, 140],
  [1, 50, 150, 150, 230, 170, 330, 200, 400, 215],
  [0, 16, 230, 40, 300, 75, 390, 100, 460, 110, 510, 160],
  [6, 16, 230, 10, 300, 40, 370, 50],
  [7, 10, 250, 5, 280, 20],
  [4, 14, 370, 0, 400, 50, 370, 70],
  [6, 10, 375, 10, 400, 45],
  [0, 22, 425, 20, 430, 80],
  [0, 14, 460, 50, 530, 110],
  [6, 30, 480, 0, 530, 60, 570, 80, 590, 150],
  [7, 18, 520, 60, 555, 80],
  [4, 14, 440, 90, 500, 120, 560, 150],
  [7, 20, 430, 130, 480, 180, 490, 210, 515, 240],
  [6, 26, 390, 130, 450, 150, 500, 220, 510, 280],
  [5, 34, 440, 190, 460, 260],
  [1, 0, 510, 230, 600, 160, 655, 225, 640, 260, 580, 310],
  [0, 36, 545, 245, 560, 215, 590, 190],
  [3, 6, 520, 200, 570, 220, 605, 210],
  [2, 14, 595, 60, 600, 150],
  [6, 12, 60, 160, 90, 145],
  [1, 30, 30, 20, 50, 10],
  [0, 10, 0, 90, 50, 95],
  [7, 12, 125, 115, 140, 125],
  [5, 12, 130, 165, 190, 200],
  [6, 28, 30, 210, 110, 220, 130, 280, 150, 320],
  [0, 14, 0, 220, 50, 230, 75, 290],
  [4, 14, 20, 210, 80, 240, 90, 300],
  [7, 24, 30, 330, 60, 370, 110, 365, 155, 325],
  [4, 26, 60, 350, 110, 330, 150, 290],
  [6, 16, 0, 255, 30, 290, 10, 320],
  [6, 16, 190, 225, 210, 270, 240, 310],
  [4, 30, 185, 230, 220, 330, 280, 420, 310, 470],
  [1, 24, 190, 320, 200, 380],
  [0, 34, 200, 405, 250, 440, 290, 500],
  [0, 44, 260, 330, 310, 390, 370, 410],
  [1, 20, 230, 260, 240, 310],
  [4, 20, 260, 250, 340, 250, 430, 260],
  [0, 16, 290, 285, 340, 320, 410, 340, 480, 350],
  [6, 20, 310, 310, 350, 350, 390, 380],
  [4, 16, 340, 290, 420, 320, 510, 330],
  [5, 26, 400, 365, 450, 380, 480, 400, 450, 430],
  [6, 12, 500, 290, 550, 300, 550, 330],
  [0, 26, 485, 375, 495, 380],
  [1, 20, 490, 320, 530, 310],
  [7, 12, 495, 410, 520, 350, 550, 325],
  [1, 50, 370, 450, 440, 450],
  [0, 20, 400, 440, 450, 465],
  [6, 24, 0, 400, 15, 395],
  [0, 12, 30, 395, 100, 400, 190, 400],
  [7, 24, 20, 465, 60, 435, 100, 440],
  [6, 16, 90, 440, 110, 490, 160, 490],
  [0, 30, 60, 490, 90, 510],
  [4, 16, 140, 460, 200, 460, 260, 480, 270, 510],
  [0, 12, 0, 530, 60, 550, 150, 560, 190, 530],
  [6, 12, 40, 535, 90, 545, 130, 545],
  [4, 34, 40, 590, 60, 640, 130, 670],
  [3, 46, 90, 630, 150, 630],
  [6, 14, 45, 575, 90, 600, 150, 600],
  [0, 10, 40, 570, 60, 600, 100, 610],
  [6, 12, 0, 610, 30, 640],
  [0, 30, 180, 560, 185, 670, 130, 700],
  [0, 24, 0, 680, 60, 700, 140, 700],
  [7, 22, 0, 720, 25, 750],
  [2, 30, 100, 720, 60, 770, 30, 800],
  [4, 10, 30, 790, 60, 740, 100, 710],
  [2, 30, 480, 440, 540, 360, 590, 310],
];

// Flat triangles and slivers along the hull, drawn crisp on top (north-west coordinates)
const hullFacets: Feature[] = [
  // north-west fan
  [2, 0, 560, 312, 640, 180, 860, 48, 780, 110, 735, 200, 680, 262, 610, 300],
  [1, 0, 600, 222, 860, 48, 770, 120, 640, 205, 540, 268],
  [7, 0, 420, 326, 480, 285, 600, 222, 520, 285, 490, 316],
  [6, 0, 490, 316, 545, 284, 690, 226, 600, 282, 550, 316],
  [1, 9, 545, 290, 640, 246, 740, 190],
  [7, 7, 500, 302, 620, 240, 740, 172],
  [4, 4, 520, 284, 640, 214, 770, 140],
  [4, 4, 510, 306, 620, 256, 700, 222],
  [6, 3, 600, 232, 700, 180, 780, 130],
  [1, 7, 70, 688, 210, 522, 325, 385],
  [8, 10, 340, 374, 440, 322, 520, 270],
  [8, 13, 430, 324, 590, 218],
  [8, 6, 580, 224, 720, 136, 770, 104],
  [1, 8, 770, 104, 830, 68, 870, 48],
  // north-east edge
  [6, 4, 890, 54, 1000, 70, 1070, 80],
  [2, 3, 900, 60, 1000, 76, 1060, 84],
  [0, 5, 1080, 82, 1140, 152, 1226, 236, 1246, 290],
  // east sliver
  [3, 0, 1140, 520, 1220, 400, 1220, 700, 1190, 650],
  [2, 0, 1132, 455, 1140, 520, 1225, 390, 1244, 330, 1200, 395],
  [2, 6, 1150, 570, 1214, 420],
  [1, 0, 1243, 350, 1249, 290, 1316, 1036, 1300, 1010, 1258, 900, 1246, 800],
  [4, 6, 1228, 390, 1228, 650],
  [7, 5, 1221, 400, 1222, 680],
  [7, 9, 1238, 400, 1239, 640, 1238, 770],
  [5, 4, 1240, 350, 1238, 440],
  [3, 7, 1246, 790, 1262, 880, 1290, 960],
  [0, 5, 1248, 300, 1285, 700, 1314, 1036],
  [0, 3, 1252, 820, 1275, 900, 1308, 1010],
  [6, 4, 1250, 815, 1280, 930, 1312, 1030],
  // south-east edge
  [2, 0, 1300, 1070, 1240, 1120, 1170, 1180, 1140, 1270, 1200, 1200],
  [7, 8, 1290, 1082, 1240, 1136, 1205, 1186],
  [4, 4, 1205, 1186, 1150, 1260],
  [1, 0, 880, 1460, 920, 1380, 990, 1320, 1130, 1284, 990, 1388],
  [3, 0, 890, 1450, 960, 1330, 1060, 1300],
  [5, 0, 862, 1465, 870, 1390, 940, 1342, 905, 1420],
  [3, 5, 900, 1440, 990, 1360, 1080, 1310],
  [2, 6, 920, 1430, 1010, 1360, 1100, 1300],
  [4, 4, 880, 1450, 960, 1380, 1000, 1330],
  [0, 5, 1132, 1280, 1060, 1330, 990, 1388],
  [5, 5, 990, 1386, 920, 1432],
  [7, 9, 930, 1428, 870, 1466, 790, 1530],
  [2, 0, 680, 1618, 760, 1520, 850, 1470, 790, 1530],
  [4, 4, 690, 1600, 740, 1550, 790, 1520],
  [6, 4, 790, 1530, 740, 1568],
  // south-west sliver
  [1, 0, 42, 1385, 100, 1404, 330, 1468, 440, 1520, 560, 1590, 625, 1635],
  [4, 8, 110, 1410, 230, 1444, 326, 1464],
  [6, 4, 150, 1422, 240, 1448, 326, 1465],
  [3, 4, 72, 1396, 140, 1420, 220, 1444],
  [0, 6, 100, 1398, 230, 1398],
  [5, 16, 395, 1496, 450, 1520, 520, 1560, 600, 1615],
  [6, 10, 390, 1492, 450, 1514, 520, 1556, 610, 1622],
  [1, 3, 430, 1520, 520, 1572, 600, 1618],
  [0, 4, 465, 1498, 540, 1550, 600, 1600, 622, 1630],
  [4, 4, 52, 960, 64, 820],
  [0, 3, 41, 975, 41, 1370],
];

function smoothPath(points: number[], closed: boolean) {
  if (closed) return 'M' + points.join(' ') + 'Z';
  let d = `M${points[0]} ${points[1]}`;
  for (let i = 2; i < points.length - 2; i += 2) {
    const midX = (points[i] + points[i + 2]) / 2;
    const midY = (points[i + 1] + points[i + 3]) / 2;
    d += `Q${points[i]} ${points[i + 1]} ${midX} ${midY}`;
  }
  return d + `L${points[points.length - 2]} ${points[points.length - 1]}`;
}

function grayFor(level: number) {
  const v = Math.round(((level + 0.5) / 9) * 255);
  return `rgb(${v},${v},${v})`;
}

function Features({ items, transform, classed }: { items: Feature[]; transform?: string; classed?: boolean }) {
  return (
    <g transform={transform}>
      {items.map(([level, width, ...points], i) => {
        const color = classed ? legend[level].color : grayFor(level);
        return (
          <path
            key={i}
            d={smoothPath(points, width === 0)}
            fill={width === 0 ? color : 'none'}
            stroke={width === 0 ? 'none' : color}
            strokeWidth={width}
            strokeLinecap="round"
            strokeLinejoin="round"
          />
        );
      })}
    </g>
  );
}

// Slope is painted as a gray surface, roughened, then split into the nine legend classes
function SlopeMap() {
  return (
    <svg viewBox="0 0 1380 1680" className="h-[560px] w-[460px] shrink-0" role="img" aria-label="Slope_create1">
      <defs>
        <clipPath id="hull">
          <path d="M870 46L900 48 1075 76 1140 150 1228 235 1248 290 1317 1030 1300 1070 1135 1280 990 1390 680 1620 625 1635 45 1385 39 1375 40 965 57 820 67 685 210 515 325 378 440 320 720 132 830 65z" />
        </clipPath>
        <filter id="classify" filterUnits="userSpaceOnUse" x="0" y="0" width="1380" height="1680" colorInterpolationFilters="sRGB">
          <feTurbulence type="fractalNoise" baseFrequency="0.014" numOctaves="3" seed="4" result="warp" />
          <feDisplacementMap in="SourceGraphic" in2="warp" scale="38" xChannelSelector="R" yChannelSelector="G" result="bent" />
          <feGaussianBlur in="bent" stdDeviation="4" result="soft" />
          <feTurbulence type="fractalNoise" baseFrequency="0.015 0.013" numOctaves="3" seed="11" />
          <feColorMatrix values="1 0 0 0 0  1 0 0 0 0  1 0 0 0 0  0 0 0 0 1" result="noise" />
          <feDisplacementMap in="noise" in2="warp" scale="160" xChannelSelector="G" yChannelSelector="R" result="grain" />
          <feComposite in="soft" in2="grain" operator="arithmetic" k1="0" k2="0.95" k3="0.42" k4="-0.19" />
          <feColorMatrix values="1 0 0 0 0  0 1 0 0 0  0 0 1 0 0  0 0 0 0 1" />
          <feComponentTransfer>
            <feFuncR type="discrete" tableValues="0.22 0.37 0.545 0.757 1 1 1 1 1" />
            <feFuncG type="discrete" tableValues="0.66 0.74 0.82 0.91 1 0.75 0.5 0.25 0" />
            <feFuncB type="discrete" tableValues="0 0 0 0 0 0 0 0 0" />
          </feComponentTransfer>
        </filter>
      </defs>
      <g clipPath="url(#hull)" shapeRendering="crispEdges">
        <g filter="url(#classify)">
          <rect width="1380" height="1680" fill="#555555" />
          <Features items={northWest} />
          <Features items={northEast} transform="translate(660 0)" />
          <Features items={southWest} transform="translate(0 810)" />
          <Features items={southEast} transform="translate(660 810)" />
        </g>
        <Features items={hullFacets} classed />
      </g>
    </svg>
  );
}

export default function App() {
  return (
    <div className='flex h-screen flex-col overflow-hidden bg-[#f0f0f0] font-["Open_Sans","Noto_Sans_CJK_SC",sans-serif] text-black'>
      <TitleBar />
      <nav className="flex h-7 shrink-0 items-center gap-[17px] bg-[#f5f5f5] pl-3">
        {menus.map((menu) => (
          <button key={menu} type="button" className="text-xs whitespace-nowrap">
            {menu}
          </button>
        ))}
      </nav>
      <Toolbars />
      <div className="flex min-h-0 flex-1">
        <ContentsPanel />
        <main className="ml-[5px] min-w-0 flex-1 overflow-hidden border-t-2 border-l-2 border-[#696969] bg-white pt-[26px] pl-[165px]">
          <SlopeMap />
        </main>
      </div>
    </div>
  );
}
